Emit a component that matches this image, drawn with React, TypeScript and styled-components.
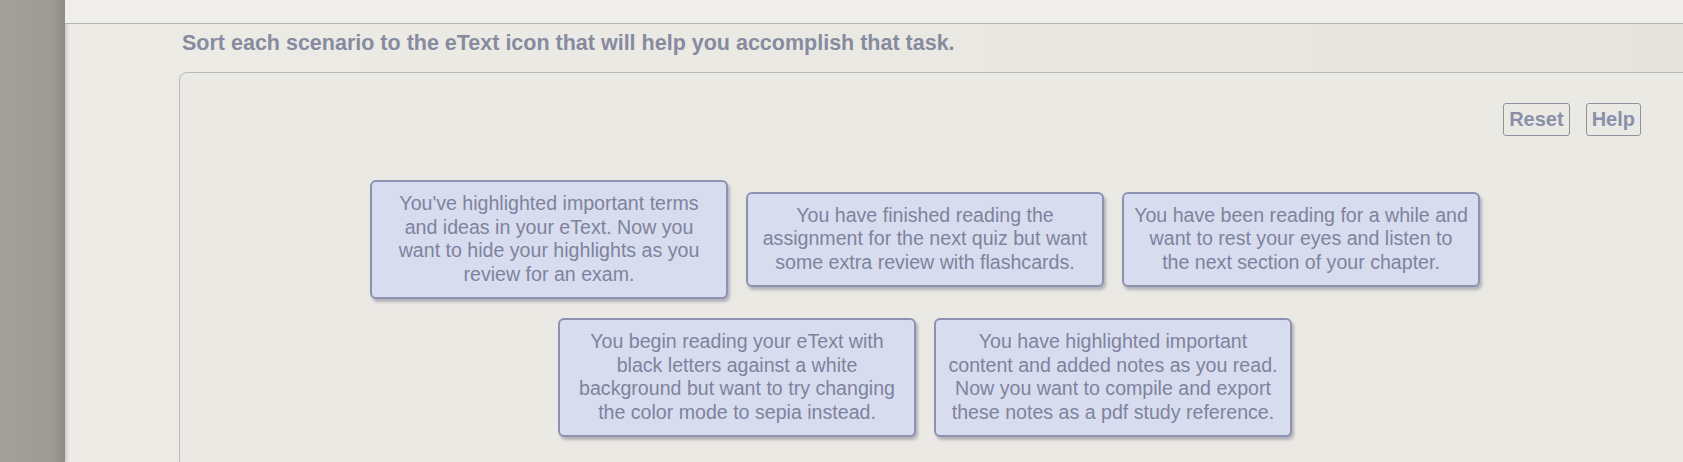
import { FC } from "react";
import styled, { createGlobalStyle } from "styled-components";

type Scenario = { id: string; lines: string[] };

const rowOne: Scenario[] = [
  {
    id: "hide",
    lines: [
      "You've highlighted important terms",
      "and ideas in your eText. Now you",
      "want to hide your highlights as you",
      "review for an exam."
    ]
  },
  {
    id: "flash",
    lines: [
      "You have finished reading the",
      "assignment for the next quiz but want",
      "some extra review with flashcards."
    ]
  },
  {
    id: "listen",
    lines: [
      "You have been reading for a while and",
      "want to rest your eyes and listen to",
      "the next section of your chapter."
    ]
  }
];

const rowTwo: Scenario[] = [
  {
    id: "sepia",
    lines: [
      "You begin reading your eText with",
      "black letters against a white",
      "background but want to try changing",
      "the color mode to sepia instead."
    ]
  },
  {
    id: "export",
    lines: [
      "You have highlighted important",
      "content and added notes as you read.",
      "Now you want to compile and export",
      "these notes as a pdf study reference."
    ]
  }
];

const ScenarioCard: FC<{ scenario: Scenario }> = ({ scenario }) => (
  <StCard>
    {scenario.lines.map(l => (
      <StLine key={l}>{l}</StLine>
    ))}
  </StCard>
);

const App: FC = () => {
  return (
    <>
      <GlobalStyle />
      <StPage>
        <StSideStrip />
        <StMain>
          <StTopBar />
          <StTitle>
            Sort each scenario to the eText icon that will help you accomplish
            that task.
          </StTitle>
          <StPanel>
            <StToolbar>
              <StButton>Reset</StButton>
              <StButton>Help</StButton>
            </StToolbar>
            <StCardArea>
              <StRow>
                {rowOne.map(s => (
                  <ScenarioCard key={s.id} scenario={s} />
                ))}
              </StRow>
              <StRow>
                {rowTwo.map(s => (
                  <ScenarioCard key={s.id} scenario={s} />
                ))}
              </StRow>
            </StCardArea>
          </StPanel>
        </StMain>
      </StPage>
    </>
  );
};

export default App;

const GlobalStyle = createGlobalStyle`
  html, body {
    margin: 0;
    padding: 0;
    overflow: hidden;
    background: #ebe9e4;
    font-family: "Liberation Sans", Arial, sans-serif;
  }
`;

const StPage = styled.div`
  display: flex;
  width: 1683px;
  height: 462px;
  overflow: hidden;
  background: linear-gradient(90deg, #ecebe6 0%, #eae8e3 60%, #e6e4df 100%);
`;

const StSideStrip = styled.div`
  width: 65px;
  flex-shrink: 0;
  background: linear-gradient(90deg, #a4a19c 0%, #9e9b96 80%, #8f8c88 100%);
  box-shadow: 2px 0 3px rgba(0, 0, 0, 0.15);
`;

const StMain = styled.div`
  flex: 1;
  display: flex;
  flex-direction: column;
  min-width: 0;
`;

const StTopBar = styled.div`
  height: 23px;
  flex-shrink: 0;
  background: #efeeea;
  border-bottom: 1.5px solid #b4b4b8;
`;

const StTitle = styled.h2`
  margin: 7px 0 0 117px;
  font-size: 21.5px;
  line-height: 24px;
  font-weight: 700;
  color: #878b9f;
  white-space: nowrap;
`;

const StPanel = styled.div`
  flex: 1;
  margin: 17px -20px -30px 114px;
  border: 1.5px solid #b8b8bd;
  border-radius: 8px 0 0 0;
  background: #ebe9e4;
  display: flex;
  flex-direction: column;
`;

const StToolbar = styled.div`
  display: flex;
  justify-content: flex-end;
  gap: 16px;
  padding: 30px 61px 0 0;
`;

const StButton = styled.button`
  background: transparent;
  border: 1.5px solid #8f91a0;
  border-radius: 3px;
  padding: 0 5px;
  height: 33px;
  font-family: "Liberation Sans", Arial, sans-serif;
  font-size: 20px;
  font-weight: 700;
  color: #8a90aa;
  cursor: pointer;
`;

const StCardArea = styled.div`
  display: flex;
  flex-direction: column;
  gap: 19px;
  margin-top: 44px;
  padding-right: 32px;
`;

const StRow = styled.div`
  display: flex;
  justify-content: center;
  align-items: center;
  gap: 18px;
`;

const StCard = styled.div`
  width: 358px;
  box-sizing: border-box;
  padding: 10px 2px 11px;
  background: #d8dcef;
  border: 2px solid #8d92b1;
  border-radius: 6px;
  box-shadow: 2px 3px 3px rgba(70, 72, 100, 0.35);
  text-align: center;
  color: #7e839d;
  font-size: 19.6px;
  line-height: 23.5px;
`;

const StLine = styled.div`
  white-space: nowrap;
`;
